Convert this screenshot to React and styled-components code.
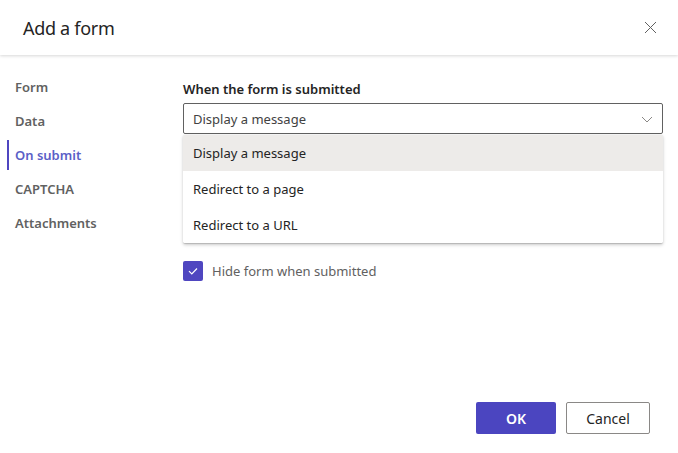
import React from 'react'
import styled, { createGlobalStyle } from 'styled-components'

const GlobalStyle = createGlobalStyle`
  body {
    margin: 0;
    background: #ffffff;
    font-family: "Noto Sans", "Open Sans", Arial, sans-serif;
  }
`

const navItems = ['Form', 'Data', 'On submit', 'CAPTCHA', 'Attachments']
const options = ['Display a message', 'Redirect to a page', 'Redirect to a URL']

const App = () => {
  return (
    <Dialog>
      <GlobalStyle />
      <Header>
        <Title>Add a form</Title>
        <CloseButton aria-label='Close'>
          <svg width='13' height='13' viewBox='0 0 13 13'>
            <path d='M1 1 L12 12 M12 1 L1 12' stroke='#616161' strokeWidth='1' fill='none' />
          </svg>
        </CloseButton>
      </Header>
      <Body>
        <Nav>
          {navItems.map((item) => (
            <NavItem key={item} $active={item === 'On submit'}>{item}</NavItem>
          ))}
        </Nav>
        <Content>
          <Label>When the form is submitted</Label>
          <SelectWrap>
            <Select>
              <span>Display a message</span>
              <svg width='14' height='14' viewBox='0 0 14 14'>
                <path d='M2 5 L7 10 L12 5' stroke='#8a8886' strokeWidth='1' fill='none' />
              </svg>
            </Select>
            <Menu>
              {options.map((opt, i) => (
                <Option key={opt} $selected={i === 0}>{opt}</Option>
              ))}
            </Menu>
          </SelectWrap>
          <CheckRow>
            <Check>
              <svg width='12' height='12' viewBox='0 0 12 12'>
                <path d='M2 6.2 L4.8 9 L10 3.5' stroke='#ffffff' strokeWidth='1.2' fill='none' />
              </svg>
            </Check>
            <CheckText>Hide form when submitted</CheckText>
          </CheckRow>
        </Content>
      </Body>
      <Footer>
        <PrimaryButton>OK</PrimaryButton>
        <SecondaryButton>Cancel</SecondaryButton>
      </Footer>
    </Dialog>
  )
}

const Dialog = styled.div`
  width: 678px;
  height: 453px;
  display: flex;
  flex-direction: column;
  background: #ffffff;
  overflow: hidden;
`

const Header = styled.div`
  height: 55px;
  flex-shrink: 0;
  display: flex;
  align-items: center;
  justify-content: space-between;
  padding: 0 23px 0 23px;
  box-shadow: 0 1px 3px rgba(0, 0, 0, 0.16);
  position: relative;
  z-index: 1;
`

const Title = styled.h1`
  margin: 0;
  font-size: 18px;
  font-weight: 400;
  color: #242424;
  letter-spacing: -0.3px;
`

const CloseButton = styled.button`
  border: none;
  background: none;
  padding: 0;
  margin-right: -2px;
  width: 14px;
  height: 14px;
  display: flex;
  align-items: center;
  justify-content: center;
`

const Body = styled.div`
  flex: 1;
  display: flex;
`

const Nav = styled.div`
  width: 183px;
  flex-shrink: 0;
  padding-top: 15px;
  display: flex;
  flex-direction: column;
`

const NavItem = styled.div`
  height: 34px;
  display: flex;
  align-items: center;
  padding-left: 15px;
  font-size: 13px;
  font-weight: 600;
  color: ${(p) => (p.$active ? '#5b5fc7' : '#616161')};
  position: relative;

  &::before {
    content: '';
    display: ${(p) => (p.$active ? 'block' : 'none')};
    position: absolute;
    left: 7px;
    top: 2px;
    width: 2px;
    height: 30px;
    background: #4f46c0;
  }
`

const Content = styled.div`
  flex: 1;
  padding: 25px 15px 0 0;
  display: flex;
  flex-direction: column;
`

const Label = styled.div`
  font-size: 13px;
  font-weight: 600;
  color: #242424;
  line-height: 18px;
  margin-bottom: 5px;
`

const SelectWrap = styled.div`
  position: relative;
  z-index: 2;
`

const Select = styled.div`
  height: 31px;
  box-sizing: border-box;
  border: 1px solid #616161;
  border-radius: 2px;
  display: flex;
  align-items: center;
  justify-content: space-between;
  padding: 0 8px 0 9px;
  font-size: 13px;
  color: #424242;
`

const Menu = styled.div`
  position: absolute;
  left: 0;
  right: 0;
  top: 32px;
  background: #ffffff;
  border-radius: 2px;
  box-shadow: 0 1.6px 3.6px rgba(0, 0, 0, 0.2), 0 0.3px 1px rgba(0, 0, 0, 0.15);
  overflow: hidden;
`

const Option = styled.div`
  height: 36px;
  display: flex;
  align-items: center;
  padding-left: 10px;
  font-size: 13px;
  color: #242424;
  background: ${(p) => (p.$selected ? '#edebe9' : '#ffffff')};
`

const CheckRow = styled.div`
  margin-top: 127px;
  display: flex;
  align-items: center;
  gap: 9px;
`

const Check = styled.div`
  width: 20px;
  height: 20px;
  border-radius: 2px;
  background: #4f46c0;
  display: flex;
  align-items: center;
  justify-content: center;
`

const CheckText = styled.span`
  font-size: 13px;
  color: #616161;
`

const Footer = styled.div`
  display: flex;
  justify-content: flex-end;
  gap: 10px;
  padding: 0 28px 19px 0;
`

const PrimaryButton = styled.button`
  width: 80px;
  height: 32px;
  border: none;
  border-radius: 2px;
  background: #4b45c0;
  color: #ffffff;
  font-family: inherit;
  font-size: 14px;
  font-weight: 600;
`

const SecondaryButton = styled.button`
  width: 84px;
  height: 32px;
  border: 1px solid #8a8886;
  border-radius: 2px;
  background: #ffffff;
  color: #242424;
  font-family: inherit;
  font-size: 14px;
  font-weight: 400;
`

export default App
